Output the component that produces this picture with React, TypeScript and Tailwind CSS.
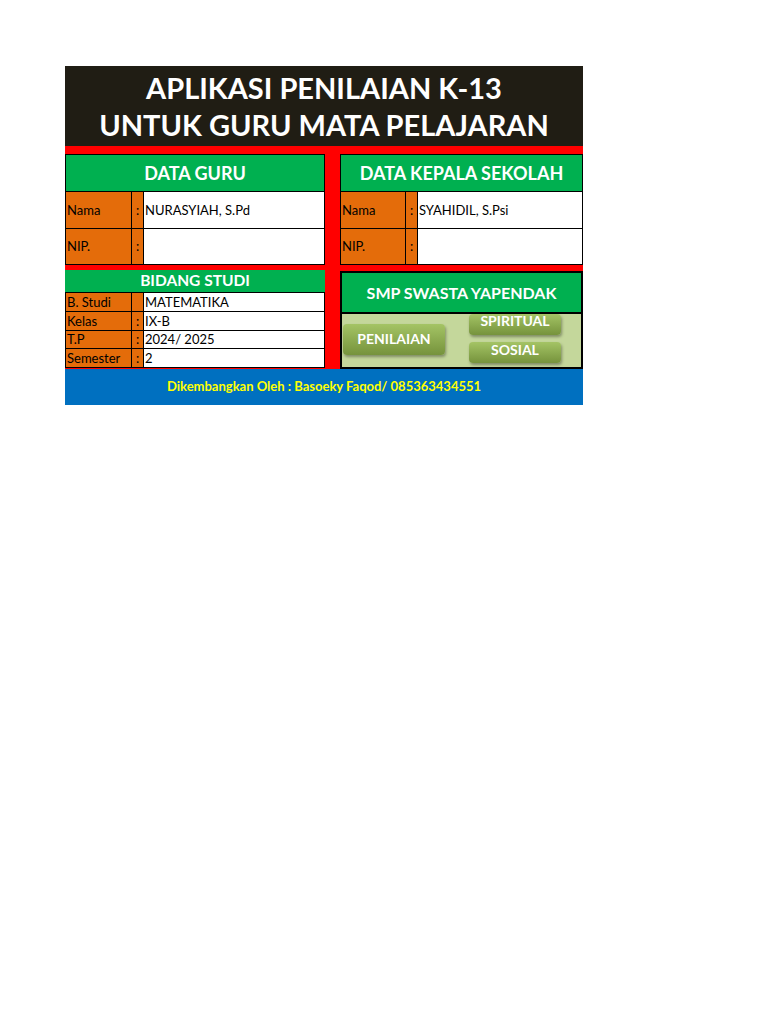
import React from "react";

const font = { fontFamily: "Lato, 'Open Sans', sans-serif" };

function Row({ label, colon, value, h, cols }: { label: string; colon: string; value: string; h: string; cols: string }) {
  return (
    <div className={`grid ${cols} grid-rows-[100%] gap-px ${h} leading-[15px] overflow-hidden`}>
      <div className="bg-[#e46c0a] flex items-center pl-[1px] text-[13px] text-black overflow-hidden">{label}</div>
      <div className="bg-[#e46c0a] flex items-center justify-center text-[13px] text-black overflow-hidden">{colon}</div>
      <div className="bg-white flex items-center pl-[1px] text-[13px] text-black overflow-hidden">{value}</div>
    </div>
  );
}

function Btn({ children, className }: { children: React.ReactNode; className: string }) {
  return (
    <div
      className={`absolute rounded-[4px] bg-gradient-to-b from-[#a4c465] to-[#76933c] shadow-[1px_2px_3px_rgba(0,0,0,0.35)] text-white font-bold text-[14px] flex justify-center ${className}`}
    >
      {children}
    </div>
  );
}

export default function App() {
  return (
    <div className="w-[768px] h-[1024px] bg-white" style={font}>
      <div className="ml-[65px] pt-[66px] w-[518px]">
        <div className="h-[80px] bg-[#201d14] flex flex-col items-center justify-center text-white font-bold text-[29px] leading-[37px]">
          <div>APLIKASI PENILAIAN K-13</div>
          <div>UNTUK GURU MATA PELAJARAN</div>
        </div>
        <div className="bg-[#ff0000] pt-[8px] flex gap-[15px]">
          <div className="w-[260px] flex flex-col">
            <div className="bg-black p-px flex flex-col gap-px">
              <div className="h-[36px] bg-[#00b050] flex items-center justify-center text-white font-bold text-[18px]">DATA GURU</div>
              <Row label="Nama" colon=":" value="NURASYIAH, S.Pd" h="h-[36px]" cols="grid-cols-[65px_11px_1fr]" />
              <Row label="NIP." colon=":" value="" h="h-[35px]" cols="grid-cols-[65px_11px_1fr]" />
            </div>
            <div className="h-[5px]" />
            <div className="flex flex-col">
              <div className="h-[23px] bg-[#00b050] flex items-center justify-center text-white font-bold text-[15.5px] border-b border-black">BIDANG STUDI</div>
              <div className="bg-black px-px pb-px flex flex-col gap-px">
                <Row label="B. Studi" colon="" value="MATEMATIKA" h="h-[18px]" cols="grid-cols-[65px_11px_1fr]" />
                <Row label="Kelas" colon=":" value="IX-B" h="h-[18px]" cols="grid-cols-[65px_11px_1fr]" />
                <Row label="T.P" colon=":" value="2024/ 2025" h="h-[17px]" cols="grid-cols-[65px_11px_1fr]" />
                <Row label="Semester" colon=":" value="2" h="h-[18px]" cols="grid-cols-[65px_11px_1fr]" />
              </div>
            </div>
          </div>
          <div className="w-[243px] flex flex-col">
            <div className="bg-black p-px flex flex-col gap-px">
              <div className="h-[36px] bg-[#00b050] flex items-center justify-center text-white font-bold text-[18px]">DATA KEPALA SEKOLAH</div>
              <Row label="Nama" colon=":" value="SYAHIDIL, S.Psi" h="h-[36px]" cols="grid-cols-[64px_11px_1fr]" />
              <Row label="NIP." colon=":" value="" h="h-[35px]" cols="grid-cols-[64px_11px_1fr]" />
            </div>
            <div className="h-[6px]" />
            <div className="border-2 border-black flex flex-col h-[98px]">
              <div className="h-[41px] bg-[#00b050] border-b-2 border-black flex items-center justify-center text-white font-bold text-[16px]">SMP SWASTA YAPENDAK</div>
              <div className="flex-1 bg-[#c4d79b] relative">
                <Btn className="left-[1px] top-[10px] w-[102px] h-[31px] pt-[4px]">PENILAIAN</Btn>
                <Btn className="left-[127px] top-[0px] w-[92px] h-[21px] leading-[14px]">SPIRITUAL</Btn>
                <Btn className="left-[127px] top-[28px] w-[92px] h-[21px] leading-[16px]">SOSIAL</Btn>
              </div>
            </div>
          </div>
        </div>
        <div className="h-[36px] bg-[#0070c0] flex items-center justify-center text-[#ffff00] font-bold text-[13px]">
          Dikembangkan Oleh : Basoeky Faqod/ 085363434551
        </div>
      </div>
    </div>
  );
}
